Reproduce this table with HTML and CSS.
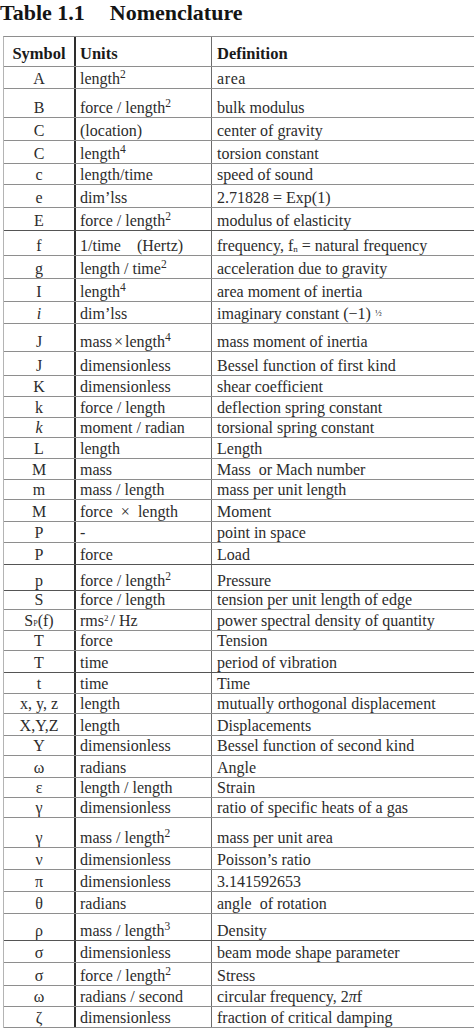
FILE: index.html
```html
<!DOCTYPE html>
<html lang="en">
<head>
<meta charset="utf-8">
<title>Table 1.1 Nomenclature</title>
<link rel="stylesheet" href="styles.css">
</head>
<body>
<h1 class="title"><span>Table 1.1</span><span class="name">Nomenclature</span></h1>
<div class="table">
  <div class="row head h30"><div class="c sym">Symbol</div><div class="c unit">Units</div><div class="c def">Definition</div></div>
  <div class="row h22"><div class="c sym">A</div><div class="c unit">length<sup>2</sup></div><div class="c def sp">area</div></div>
  <div class="row h29"><div class="c sym">B</div><div class="c unit">force / length<sup>2</sup></div><div class="c def">bulk modulus</div></div>
  <div class="row h23"><div class="c sym">C</div><div class="c unit">(location)</div><div class="c def">center of gravity</div></div>
  <div class="row h23"><div class="c sym">C</div><div class="c unit">length<sup>4</sup></div><div class="c def">torsion constant</div></div>
  <div class="row h21"><div class="c sym">c</div><div class="c unit">length/time</div><div class="c def">speed of sound</div></div>
  <div class="row h23"><div class="c sym">e</div><div class="c unit">dim’lss</div><div class="c def">2.71828 = Exp(1)</div></div>
  <div class="row h23 dk"><div class="c sym">E</div><div class="c unit">force / length<sup>2</sup></div><div class="c def">modulus of elasticity</div></div>
  <div class="row h25"><div class="c sym">f</div><div class="c unit">1/time&nbsp;&nbsp;&nbsp; (Hertz)</div><div class="c def">frequency, f<sub>n</sub> = natural frequency</div></div>
  <div class="row h23"><div class="c sym">g</div><div class="c unit">length / time<sup>2</sup></div><div class="c def">acceleration due to gravity</div></div>
  <div class="row h23"><div class="c sym">I</div><div class="c unit">length<sup>4</sup></div><div class="c def">area moment of inertia</div></div>
  <div class="row h22"><div class="c sym"><i>i</i></div><div class="c unit">dim’lss</div><div class="c def">imaginary constant (−1)&nbsp;<span class="half">½</span></div></div>
  <div class="row h28"><div class="c sym">J</div><div class="c unit">mass<span class="x">×</span>length<sup>4</sup></div><div class="c def">mass moment of inertia</div></div>
  <div class="row h24"><div class="c sym">J</div><div class="c unit">dimensionless</div><div class="c def">Bessel function of first kind</div></div>
  <div class="row h21"><div class="c sym">K</div><div class="c unit">dimensionless</div><div class="c def">shear coefficient</div></div>
  <div class="row h21"><div class="c sym">k</div><div class="c unit">force / length</div><div class="c def">deflection spring constant</div></div>
  <div class="row h20"><div class="c sym"><i>k</i></div><div class="c unit">moment / radian</div><div class="c def">torsional spring constant</div></div>
  <div class="row h21"><div class="c sym">L</div><div class="c unit">length</div><div class="c def">Length</div></div>
  <div class="row h21"><div class="c sym">M</div><div class="c unit">mass</div><div class="c def">Mass&nbsp; or Mach number</div></div>
  <div class="row h20"><div class="c sym">m</div><div class="c unit">mass / length</div><div class="c def">mass per unit length</div></div>
  <div class="row h22"><div class="c sym">M</div><div class="c unit">force &nbsp;× &nbsp;length</div><div class="c def">Moment</div></div>
  <div class="row h21"><div class="c sym">P</div><div class="c unit">-</div><div class="c def">point in space</div></div>
  <div class="row h22 dk"><div class="c sym">P</div><div class="c unit">force</div><div class="c def">Load</div></div>
  <div class="row h26 dk"><div class="c sym">p</div><div class="c unit">force / length<sup>2</sup></div><div class="c def">Pressure</div></div>
  <div class="row h19"><div class="c sym">S</div><div class="c unit">force / length</div><div class="c def">tension per unit length of edge</div></div>
  <div class="row h21"><div class="c sym">S<sub class="p">P</sub>(f)</div><div class="c unit">rms<sup class="small">2</sup>/ Hz</div><div class="c def">power spectral density of quantity</div></div>
  <div class="row h20"><div class="c sym">T</div><div class="c unit">force</div><div class="c def">Tension</div></div>
  <div class="row h22 dk"><div class="c sym">T</div><div class="c unit">time</div><div class="c def">period of vibration</div></div>
  <div class="row h21"><div class="c sym">t</div><div class="c unit">time</div><div class="c def">Time</div></div>
  <div class="row h20"><div class="c sym">x, y, z</div><div class="c unit">length</div><div class="c def">mutually orthogonal displacement</div></div>
  <div class="row h22"><div class="c sym">X,Y,Z</div><div class="c unit">length</div><div class="c def">Displacements</div></div>
  <div class="row h20"><div class="c sym">Y</div><div class="c unit">dimensionless</div><div class="c def">Bessel function of second kind</div></div>
  <div class="row h22"><div class="c sym">ω</div><div class="c unit">radians</div><div class="c def">Angle</div></div>
  <div class="row h20"><div class="c sym">ε</div><div class="c unit">length / length</div><div class="c def">Strain</div></div>
  <div class="row h20"><div class="c sym">γ</div><div class="c unit">dimensionless</div><div class="c def">ratio of specific heats of a gas</div></div>
  <div class="row h30"><div class="c sym">γ</div><div class="c unit">mass / length<sup>2</sup></div><div class="c def">mass per unit area</div></div>
  <div class="row h22"><div class="c sym">ν</div><div class="c unit">dimensionless</div><div class="c def">Poisson’s ratio</div></div>
  <div class="row h22"><div class="c sym">π</div><div class="c unit">dimensionless</div><div class="c def">3.141592653</div></div>
  <div class="row h22"><div class="c sym">θ</div><div class="c unit">radians</div><div class="c def">angle&nbsp; of rotation</div></div>
  <div class="row h27 dk"><div class="c sym">ρ</div><div class="c unit">mass / length<sup>3</sup></div><div class="c def">Density</div></div>
  <div class="row h22"><div class="c sym">σ</div><div class="c unit">dimensionless</div><div class="c def">beam mode shape parameter</div></div>
  <div class="row h23"><div class="c sym">σ</div><div class="c unit">force / length<sup>2</sup></div><div class="c def">Stress</div></div>
  <div class="row h21"><div class="c sym">ω</div><div class="c unit">radians / second</div><div class="c def">circular frequency, 2<i>π</i>f</div></div>
  <div class="row h21"><div class="c sym">ζ</div><div class="c unit">dimensionless</div><div class="c def">fraction of critical damping</div></div>
</div>
</body>
</html>
```

FILE: styles.css
```css
html, body {
  margin: 0;
  padding: 0;
  background: #ffffff;
}

body {
  width: 474px;
  overflow: hidden;
  font-family: "Liberation Serif", "Times New Roman", serif;
  color: #2c2c2c;
}

.title {
  margin: 0 0 11px 0;
  font-size: 22px;
  line-height: 25px;
  font-weight: bold;
  color: #141414;
  white-space: nowrap;
}

.title .name {
  margin-left: 25px;
}

/* vertical column rules drawn as backgrounds so cells can sit on the baseline */
.table {
  margin-left: 3px;
  width: 474px;
  border-top: 1px solid #8e8e8e;
  border-left: 1px solid #b4b4b4;
  background:
    linear-gradient(#2e2e2e, #2e2e2e) 70px 0 / 2px 100% no-repeat,
    linear-gradient(#6c6c6c, #6c6c6c) 207px 0 / 1px 100% no-repeat;
}

.row {
  display: grid;
  grid-template-columns: 70px 137px 1fr;
  box-sizing: border-box;
  border-bottom: 1px solid #8e8e8e;
}

.row.dk {
  border-bottom-color: #555555;
}

.c {
  align-self: end;
  font-size: 16px;
  line-height: 16px;
  padding-bottom: 1px;
  white-space: nowrap;
}

.sym {
  text-align: center;
}

.unit {
  padding-left: 6px;
}

.def {
  padding-left: 6px;
}

.head .c {
  font-size: 16.5px;
  font-weight: bold;
  color: #1a1a1a;
  padding-bottom: 4px;
}

.sp {
  letter-spacing: 0.6px;
}

.x {
  margin: 0 2px;
}

sup {
  font-size: 11.5px;
  line-height: 0;
  vertical-align: 6px;
}

sup.small {
  font-size: 9px;
  vertical-align: 5px;
  margin-right: 2px;
}

sub {
  font-size: 9px;
  line-height: 0;
  vertical-align: -1px;
}

sub.p {
  font-size: 8px;
  vertical-align: 0;
}

.half {
  font-size: 9px;
  line-height: 0;
  vertical-align: 3px;
}

.h19 { height: 19px; }
.h20 { height: 20px; }
.h21 { height: 21px; }
.h22 { height: 22px; }
.h23 { height: 23px; }
.h24 { height: 24px; }
.h25 { height: 25px; }
.h26 { height: 26px; }
.h27 { height: 27px; }
.h28 { height: 28px; }
.h29 { height: 29px; }
.h30 { height: 30px; }
```
